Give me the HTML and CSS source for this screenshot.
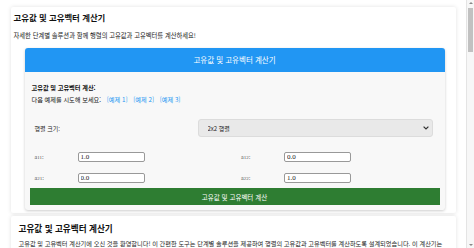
FILE: index.html
```
<!DOCTYPE html>
<html lang="ko">
<head>
    <meta charset="UTF-8">
    <meta name="viewport" content="width=device-width, initial-scale=1.0">
    <title>고유값 및 고유벡터 계산기</title>
    <link rel="stylesheet" href="styles.css">
</head>
<body>
    <div class="viewport">
    <div class="page">
        <div class="card intro">
            <h1>고유값 및 고유벡터 계산기</h1>
            <p class="lead">자세한 단계별 솔루션과 함께 행렬의 고유값과 고유벡터를 계산하세요!</p>
            <div class="calculator">
                <div class="calc-header">고유값 및 고유벡터 계산기</div>
                <form class="calc-body" id="eigen-form">
                    <p class="calc-intro">
                        <strong>고유값 및 고유벡터 계산:</strong><br>
                        다음 예제를 시도해 보세요: <a href="#">[예제 1]</a> <a href="#">[예제 2]</a> <a href="#">[예제 3]</a>
                    </p>
                    <div class="size-row">
                        <label for="size">행렬 크기:</label>
                        <div class="select-wrap">
                            <select id="size" name="size">
                                <option>2x2 행렬</option>
                                <option>3x3 행렬</option>
                            </select>
                            <svg class="chevron" width="6" height="4" viewBox="0 0 6 4"><path d="M0.6 0.6 L3 3 L5.4 0.6" fill="none" stroke="#333" stroke-width="1.2"/></svg>
                        </div>
                    </div>
                    <div class="matrix">
                        <div class="cell"><label>a<sub>11</sub>:</label><input type="text" value="1.0"></div>
                        <div class="cell"><label>a<sub>12</sub>:</label><input type="text" value="0.0"></div>
                        <div class="cell"><label>a<sub>21</sub>:</label><input type="text" value="0.0"></div>
                        <div class="cell"><label>a<sub>22</sub>:</label><input type="text" value="1.0"></div>
                    </div>
                    <button type="submit">고유값 및 고유벡터 계산</button>
                </form>
            </div>
        </div>
        <div class="card about">
            <h2>고유값 및 고유벡터 계산기</h2>
            <p>고유값 및 고유벡터 계산기에 오신 것을 환영합니다! 이 간편한 도구는 단계별 솔루션을 제공하여 행렬의 고유값과 고유벡터를 계산하도록 설계되었습니다. 이 계산기는 선형대수학을 공부하는 학생, 엔지니어, 연구자 모두에게 유용합니다.</p>
            <h3>고유값과 고유벡터란?</h3>
            <p>정방행렬 A에 대해 Av = λv를 만족하는 0이 아닌 벡터 v를 고유벡터라고 하고, 스칼라 λ를 그에 대응하는 고유값이라고 합니다.</p>
        </div>
    </div>
    </div>
    <div class="scrollbar">
        <span class="arrow up"></span>
        <div class="track"><div class="thumb"></div></div>
        <span class="arrow down"></span>
    </div>
    <script>
        document.getElementById('eigen-form').addEventListener('submit', function(event) {
            event.preventDefault();
        });
    </script>
</body>
</html>
```
FILE: styles.css
```
html, body {
    height: 100%;
}
body {
    font-family: "Noto Sans CJK KR", "Noto Sans", sans-serif;
    margin: 0;
    overflow: hidden;
    background-color: #fff;
    color: #222;
    display: flex;
}
.viewport {
    flex: 1;
    height: 100%;
    overflow: hidden;
}
.scrollbar {
    width: 7px;
    height: 100%;
    border-left: 1px solid #e4e4e4;
    background-color: #f7f7f7;
    display: flex;
    flex-direction: column;
    align-items: center;
}
.arrow {
    width: 0;
    height: 0;
    margin: 2px 0;
    border-left: 2px solid transparent;
    border-right: 2px solid transparent;
}
.arrow.up {
    border-bottom: 2px solid #888;
}
.arrow.down {
    border-top: 2px solid #888;
}
.track {
    flex: 1;
    align-self: stretch;
    padding: 2px 1px 0;
}
.thumb {
    height: 44px;
    background-color: #c1c1c1;
}
.page {
    width: 445px;
    margin: 0 auto;
    padding: 7px 0 0;
}
.card {
    background-color: #fff;
    box-shadow: 0 0 4px rgba(0, 0, 0, 0.12);
    border-radius: 2px;
}
.intro {
    padding: 4px 11px 3px 3px;
}
.intro h1 {
    margin: 0;
    font-size: 8.4px;
    line-height: 12px;
    font-weight: bold;
    color: #111;
}
.lead {
    margin: 8px 0 8px;
    font-size: 6.3px;
    line-height: 9px;
    color: #222;
}
.calculator {
    margin-left: 11px;
    background-color: #f8f8f8;
    border-radius: 3px;
    box-shadow: 0 1px 3px rgba(0, 0, 0, 0.2);
    overflow: hidden;
}
.calc-header {
    background-color: #2196f3;
    color: #fff;
    text-align: center;
    font-size: 7.5px;
    height: 24px;
    line-height: 24px;
}
.calc-body {
    padding: 10px 5px 5px;
    display: flex;
    flex-direction: column;
}
.calc-intro {
    margin: 0 2px;
    font-size: 6.2px;
    line-height: 12px;
    color: #111;
}
.calc-intro a {
    color: #2196f3;
    text-decoration: none;
    margin-left: 4px;
}
.size-row {
    margin-top: 13px;
    padding: 0 7px 0 5px;
    display: flex;
    align-items: center;
    font-size: 6px;
    color: #222;
}
.size-row label {
    width: 163px;
}
.select-wrap {
    position: relative;
    flex: 1;
}
.select-wrap select {
    appearance: none;
    width: 100%;
    height: 18px;
    padding: 0 9px;
    border: 1px solid #dcdcdc;
    border-radius: 3px;
    background-color: #e9e9e9;
    font-family: "Noto Sans CJK KR", "Noto Sans", sans-serif;
    font-size: 6px;
    color: #222;
}
.chevron {
    position: absolute;
    right: 4px;
    top: 7px;
}
.matrix {
    margin-top: 9px;
    padding: 0 5px;
    display: grid;
    grid-template-columns: 1fr 1fr;
    column-gap: 13px;
    grid-auto-rows: 21px;
}
.cell {
    display: flex;
    align-items: center;
    font-family: "Liberation Serif", serif;
    font-size: 6px;
    color: #555;
}
.cell label {
    width: 43px;
}
.cell sub {
    font-size: 5px;
    vertical-align: baseline;
}
.cell input {
    width: 67px;
    height: 10px;
    box-sizing: border-box;
    padding: 0 2px;
    border: 1px solid #999;
    border-radius: 2px;
    font-family: "Liberation Serif", serif;
    font-size: 7px;
    color: #222;
}
.calc-body button {
    height: 17px;
    border: none;
    background-color: #2e7d32;
    color: #fff;
    font-family: "Noto Sans CJK KR", "Noto Sans", sans-serif;
    font-size: 6.5px;
    cursor: pointer;
}
.about {
    margin-top: 3px;
    padding: 6px 8px 12px;
}
.about h2 {
    margin: 0;
    font-size: 8.6px;
    line-height: 12px;
    color: #111;
}
.about h3 {
    margin: 14px 0 4px;
    font-size: 7px;
}
.about p {
    margin: 5px 0 0;
    font-size: 6.2px;
    line-height: 10px;
    color: #222;
}
```
